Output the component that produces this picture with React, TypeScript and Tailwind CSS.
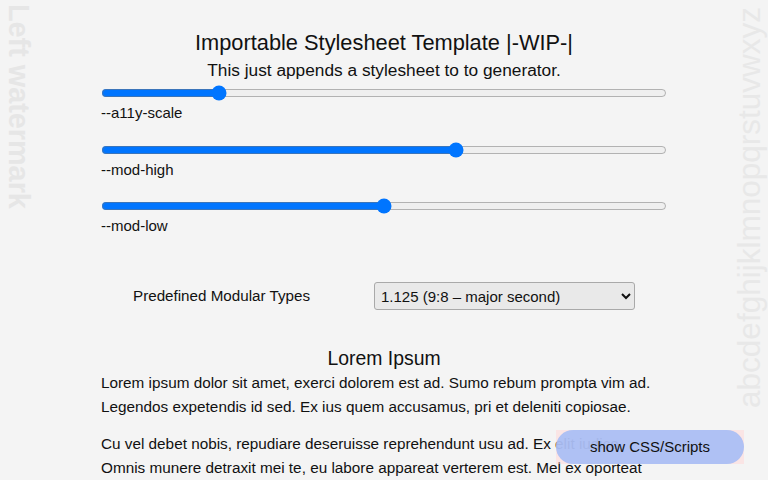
import { useState } from 'react';

const sliders = [
    { name: '--a11y-scale', value: 20 },
    { name: '--mod-high', value: 63 },
    { name: '--mod-low', value: 50 },
];

const App = () => {
    const [values, setValues] = useState(sliders.map(s => s.value));

    return (
        <div className="relative h-[480px] overflow-hidden bg-[#f4f4f4] text-[#111] font-['Liberation_Sans',Arial,sans-serif]">
            {/* Watermarks */}
            <div className="absolute left-[4px] top-[4px] text-[28.8px] font-bold leading-none text-[#e6e6e6] [writing-mode:vertical-rl] select-none">
                Left watermark
            </div>
            <div className="absolute right-[3px] bottom-[72px] text-[31.5px] leading-none text-[#e8e8e8] [writing-mode:vertical-rl] rotate-180 select-none">
                abcdefghijklmnopqrstuvwxyz
            </div>

            <div className="mx-auto w-[566px] pt-[30px]">
                <h1 className="text-center text-[21.8px] leading-[26px]">Importable Stylesheet Template |-WIP-|</h1>
                <p className="mt-[3px] text-center text-[17.3px] leading-[22px]">This just appends a stylesheet to to generator.</p>

                {/* Sliders */}
                <div className="flex flex-col">
                    {sliders.map((s, i) => (
                        <label key={s.name} className={`flex flex-col ${i > 0 ? 'mt-[19.5px]' : 'mt-[4px]'}`}>
                            <input
                                type="range"
                                min={0}
                                max={100}
                                value={values[i]}
                                onChange={e => {
                                    const next = [...values];
                                    next[i] = Number(e.target.value);
                                    setValues(next);
                                }}
                                className="w-full h-[16px] m-0 accent-[#0075ff]"
                            />
                            <span className="text-[15px] leading-[18px] mt-[3px]">{s.name}</span>
                        </label>
                    ))}
                </div>

                {/* Predefined types */}
                <div className="mt-[47px] flex items-center">
                    <span className="ml-[32px] w-[241px] text-[15.2px]">Predefined Modular Types</span>
                    <select className="w-[261px] h-[28px] border border-[#a9a9a9] rounded-[3px] bg-[#e9e9e9] px-[2px] text-[15px]">
                        <option>1.125 (9:8 – major second)</option>
                    </select>
                </div>

                {/* Lorem */}
                <h2 className="mt-[36px] text-center text-[19.4px] leading-[24px]">Lorem Ipsum</h2>
                <p className="mt-[1px] text-[15.3px] leading-[24px]">
                    Lorem ipsum dolor sit amet, exerci dolorem est ad. Sumo rebum prompta vim ad. Legendos expetendis id sed. Ex ius quem accusamus, pri et deleniti copiosae.
                </p>
                <p className="mt-[13px] text-[15.3px] leading-[24px]">
                    Cu vel debet nobis, repudiare deseruisse reprehendunt usu ad. Ex elit iudico. Omnis munere detraxit mei te, eu labore appareat verterem est. Mel ex oporteat consectetuer.
                </p>
            </div>

            {/* Floating button */}
            <div className="absolute left-[556px] top-[430px] w-[188px] h-[34px] bg-[#ffd6d6]/50">
                <button className="w-full h-full rounded-full bg-[#a6bdf5]/90 text-[15px] text-[#111]">
                    show CSS/Scripts
                </button>
            </div>
        </div>
    );
};

export default App;
